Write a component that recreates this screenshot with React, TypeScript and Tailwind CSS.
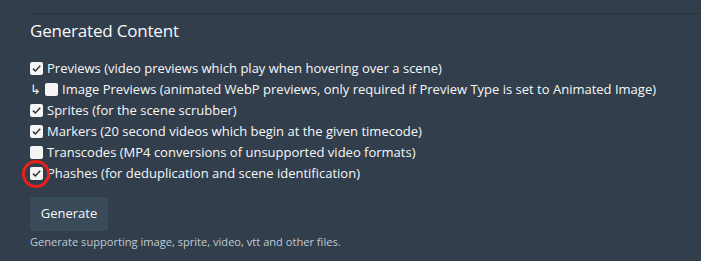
import React from "react";

function Box({ checked }: { checked: boolean }) {
  return (
    <span className="inline-flex h-[13px] w-[13px] shrink-0 items-center justify-center rounded-[2px] bg-[#f5f5f5]">
      {checked && (
        <svg width="11" height="11" viewBox="0 0 11 11">
          <path d="M2 5.6 L4.4 8 L9.2 2.8" fill="none" stroke="#333" strokeWidth="1.5" />
        </svg>
      )}
    </span>
  );
}

function Row({ checked, label, sub, mark }: { checked: boolean; label: string; sub?: boolean; mark?: boolean }) {
  return (
    <div className="flex h-[21px] items-center">
      {sub && <span className="mr-[6px] w-[9px] text-[13px] leading-none text-[#f5f8fa]">↳</span>}
      <span className="relative inline-flex">
        <Box checked={checked} />
        {mark && (
          <span className="absolute left-[-8px] top-[-7px] h-[28px] w-[28px] rounded-full border-[3px] border-[#e8201a]" />
        )}
      </span>
      <span className="ml-[4px] whitespace-nowrap">{label}</span>
    </div>
  );
}

export default function App() {
  return (
    <div
      className="h-[261px] w-[701px] overflow-hidden bg-[#323e4b] text-[#f5f8fa]"
      style={{ fontFamily: '"Open Sans", sans-serif' }}
    >
      <div className="pl-[30px] pt-[13px]">
        <div className="h-px bg-[#28323d]" />
        <h2 className="mt-[5px] text-[17px] leading-[24px] tracking-[-0.2px]">Generated Content</h2>
        <div className="mt-[15px] text-[13px]">
          <Row checked label="Previews (video previews which play when hovering over a scene)" />
          <Row sub checked={false} label="Image Previews (animated WebP previews, only required if Preview Type is set to Animated Image)" />
          <Row checked label="Sprites (for the scene scrubber)" />
          <Row checked label="Markers (20 second videos which begin at the given timecode)" />
          <Row checked={false} label="Transcodes (MP4 conversions of unsupported video formats)" />
          <Row checked mark label="Phashes (for deduplication and scene identification)" />
        </div>
        <button className="mt-[13px] flex h-[34px] w-[78px] items-center justify-center rounded-[3px] bg-[#394a59] text-[13px] text-[#f5f8fa]">
          Generate
        </button>
        <div className="mt-[3px] text-[11.1px] text-[#bfccd6]">
          Generate supporting image, sprite, video, vtt and other files.
        </div>
      </div>
    </div>
  );
}
